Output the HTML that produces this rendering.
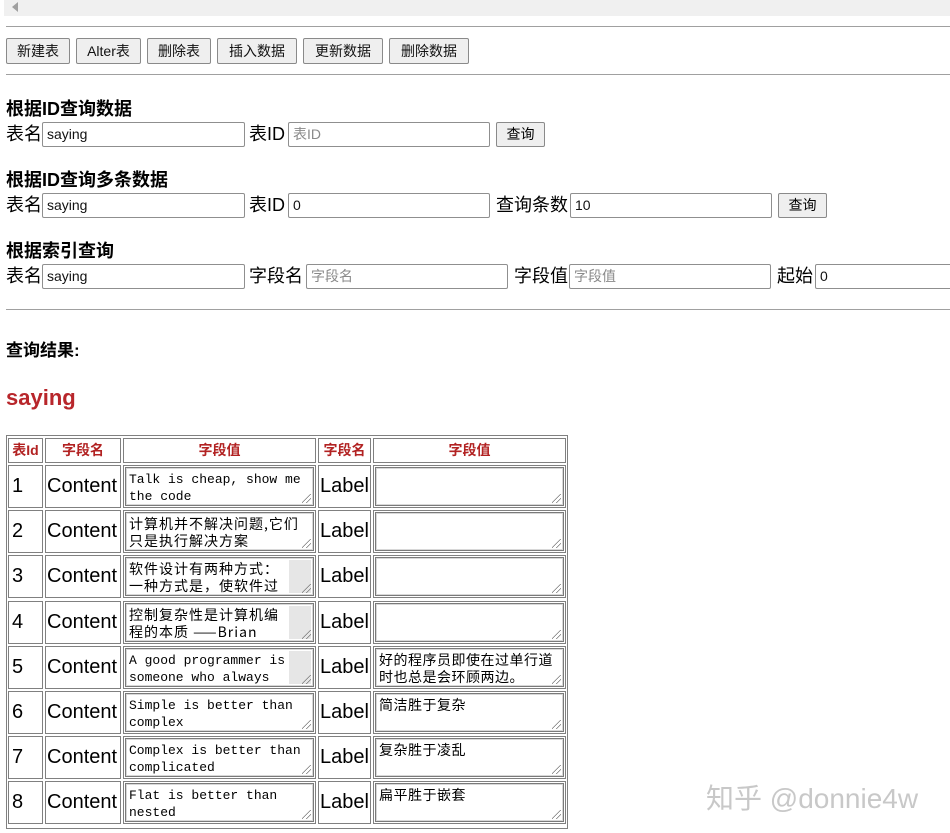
<!DOCTYPE html>
<html><head><meta charset="utf-8"><style>
*{box-sizing:border-box}
body{margin:0;width:950px;height:833px;overflow:hidden;background:#fff;position:relative;font-family:"Liberation Sans","Noto Sans CJK SC",sans-serif;color:#000}
.a{position:absolute}
.hr{position:absolute;left:6px;right:0;height:1px;background:#a0a0a0}
.btn{position:absolute;top:38px;height:26px;border:1px solid #8a8a8a;border-radius:2px;background:#efefef;font-size:14px;line-height:24px;text-align:center;color:#111}
.h{position:absolute;left:6px;font-size:18px;font-weight:bold;line-height:20px}
.lb{position:absolute;font-size:18px;line-height:24px}
.in{position:absolute;height:25px;border:1px solid #8f8f8f;border-radius:2px;background:#fff;font-size:14px;line-height:23px;padding-left:4px;color:#111}
.ph{color:#8a8a8a}
.qb{position:absolute;height:25px;border:1px solid #8a8a8a;border-radius:2px;background:#efefef;font-size:14px;line-height:23px;text-align:center}
.c{position:absolute;border:1px solid #808080}
.th{color:#b22222;font-weight:bold;font-size:14px;text-align:center;line-height:22px}
.td{font-size:20px;display:flex;align-items:center}
.ta{position:absolute;border:1px solid #7a7a7a;box-shadow:inset 0 0 0 1px #d8d8d8;background:#fff;font-family:"Liberation Mono","Noto Sans CJK SC",monospace;font-size:13px;line-height:17px;padding:3px 3px;overflow:hidden;white-space:normal}
.ta.cjk{font-family:"Noto Sans CJK SC",monospace;font-size:14px;letter-spacing:1px}
.ta.s{padding-right:26px}
.rz{position:absolute;right:2px;bottom:2px;width:9px;height:9px;background:linear-gradient(135deg,transparent 45%,#777 45%,#777 52%,transparent 52%,transparent 70%,#777 70%,#777 77%,transparent 77%)}
.sb{position:absolute;right:2px;top:2px;width:22px;bottom:2px;background:#e6e6e6}
</style></head><body>
<div class="a" style="left:4px;top:0;width:946px;height:16px;background:#f0f0f0"></div>
<div class="a" style="left:12px;top:2px;width:0;height:0;border-top:5px solid transparent;border-bottom:5px solid transparent;border-right:6px solid #a0a0a0"></div>
<div class="hr" style="top:26px"></div>
<div class="btn" style="left:6px;width:64px">新建表</div>
<div class="btn" style="left:76px;width:65px">Alter表</div>
<div class="btn" style="left:147px;width:64px">删除表</div>
<div class="btn" style="left:217px;width:80px">插入数据</div>
<div class="btn" style="left:303px;width:80px">更新数据</div>
<div class="btn" style="left:389px;width:80px">删除数据</div>
<div class="hr" style="top:74px"></div>

<div class="h" style="top:99px">根据ID查询数据</div>
<div class="lb" style="left:6px;top:122px">表名</div>
<div class="in" style="left:42px;top:122px;width:203px">saying</div>
<div class="lb" style="left:249px;top:122px">表ID</div>
<div class="in ph" style="left:288px;top:122px;width:202px">表ID</div>
<div class="qb" style="left:496px;top:122px;width:49px">查询</div>

<div class="h" style="top:170px">根据ID查询多条数据</div>
<div class="lb" style="left:6px;top:193px">表名</div>
<div class="in" style="left:42px;top:193px;width:203px">saying</div>
<div class="lb" style="left:249px;top:193px">表ID</div>
<div class="in" style="left:288px;top:193px;width:202px">0</div>
<div class="lb" style="left:496px;top:193px">查询条数</div>
<div class="in" style="left:570px;top:193px;width:202px">10</div>
<div class="qb" style="left:778px;top:193px;width:49px">查询</div>

<div class="h" style="top:241px">根据索引查询</div>
<div class="lb" style="left:6px;top:264px">表名</div>
<div class="in" style="left:42px;top:264px;width:203px">saying</div>
<div class="lb" style="left:249px;top:264px">字段名</div>
<div class="in ph" style="left:306px;top:264px;width:202px">字段名</div>
<div class="lb" style="left:514px;top:264px">字段值</div>
<div class="in ph" style="left:569px;top:264px;width:202px">字段值</div>
<div class="lb" style="left:777px;top:264px">起始</div>
<div class="in" style="left:815px;top:264px;width:150px">0</div>
<div class="hr" style="top:309px"></div>

<div class="a" style="left:6px;top:336px;font-size:17px;font-weight:bold">查询结果:</div>
<div class="a" style="left:6px;top:385px;font-size:22px;font-weight:bold;color:#b8262b">saying</div>

<div class="a" style="left:6px;top:435px;width:562px;height:394px;border:1px solid #808080"></div>
<div class="c th" style="left:8px;top:438px;width:35px;height:25px">表Id</div>
<div class="c th" style="left:45px;top:438px;width:76px;height:25px">字段名</div>
<div class="c th" style="left:123px;top:438px;width:193px;height:25px">字段值</div>
<div class="c th" style="left:318px;top:438px;width:53px;height:25px">字段名</div>
<div class="c th" style="left:373px;top:438px;width:193px;height:25px">字段值</div>

<div id="rows"></div>
<script>
var d=[
["1","Talk is cheap, show me the code","",0,0],
["2","计算机并不解决问题,它们只是执行解决方案","",1,0],
["3","软件设计有两种方式：一种方式是，使软件过","",1,1],
["4","控制复杂性是计算机编程的本质 ——Brian","",1,1],
["5","A good programmer is someone who always","好的程序员即使在过单行道时也总是会环顾两边。",0,1],
["6","Simple is better than complex","简洁胜于复杂",0,0],
["7","Complex is better than complicated","复杂胜于凌乱",0,0],
["8","Flat is better than nested","扁平胜于嵌套",0,0]];
var h="";
d.forEach(function(r,i){
var t=Math.round(465+45.2*i);
h+='<div class="c td" style="left:8px;top:'+t+'px;width:35px;height:43px;padding-left:3px">'+r[0]+'</div>';
h+='<div class="c td" style="left:45px;top:'+t+'px;width:76px;height:43px;padding-left:1px">Content</div>';
h+='<div class="c" style="left:123px;top:'+t+'px;width:193px;height:43px"><div class="ta'+(r[3]?' cjk':'')+(r[4]?' s':'')+'" style="left:1px;top:1px;width:189px;height:39px">'+(r[4]?'<div class="sb"></div>':'')+r[1]+'<div class="rz"></div></div></div>';
h+='<div class="c td" style="left:318px;top:'+t+'px;width:53px;height:43px;padding-left:1px">Label</div>';
h+='<div class="c" style="left:373px;top:'+t+'px;width:193px;height:43px"><div class="ta cjk" style="left:1px;top:1px;width:189px;height:39px;letter-spacing:0.5px">'+r[2]+'<div class="rz"></div></div></div>';
});
document.getElementById("rows").innerHTML=h;
</script>
<div class="a" style="left:706px;top:777px;font-size:28px;color:#c8c8c8">知乎 @donnie4w</div>
</body></html>
